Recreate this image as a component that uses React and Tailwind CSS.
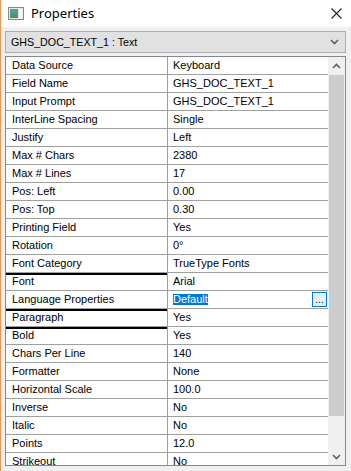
import React from "react";

const rows = [
  ["Data Source", "Keyboard"],
  ["Field Name", "GHS_DOC_TEXT_1"],
  ["Input Prompt", "GHS_DOC_TEXT_1"],
  ["InterLine Spacing", "Single"],
  ["Justify", "Left"],
  ["Max # Chars", "2380"],
  ["Max # Lines", "17"],
  ["Pos: Left", "0.00"],
  ["Pos: Top", "0.30"],
  ["Printing Field", "Yes"],
  ["Rotation", "0°"],
  ["Font Category", "TrueType Fonts", true],
  ["Font", "Arial"],
  ["Language Properties", "Default", true, true],
  ["Paragraph", "Yes", true],
  ["Bold", "Yes"],
  ["Chars Per Line", "140"],
  ["Formatter", "None"],
  ["Horizontal Scale", "100.0"],
  ["Inverse", "No"],
  ["Italic", "No"],
  ["Points", "12.0"],
  ["Strikeout", "No"],
];

const WindowIcon = () => (
  <svg width="16" height="13" viewBox="0 0 16 13">
    <rect x="0.5" y="0.5" width="15" height="12" fill="#e8e8e8" stroke="#8a8a8a" />
    <defs>
      <linearGradient id="g" x1="0" y1="0" x2="0" y2="1">
        <stop offset="0" stopColor="#5a9fb0" />
        <stop offset="1" stopColor="#3e9a4a" />
      </linearGradient>
    </defs>
    <rect x="2" y="2" width="8" height="9" fill="url(#g)" />
    <rect x="11" y="2" width="3" height="9" fill="#f8f8f8" />
  </svg>
);

const Chevron = ({ up }) => (
  <svg width="9" height="6" viewBox="0 0 9 6">
    <path
      d={up ? "M1 5 L4.5 1.5 L8 5" : "M1 1 L4.5 4.5 L8 1"}
      fill="none"
      stroke="#606060"
      strokeWidth="1.6"
    />
  </svg>
);

const Row = ({ label, value, thick, selected }) => (
  <div className="flex h-[18px]">
    <div
      className={
        "w-[162px] pl-[6px] flex items-center border-r border-r-[#a0a0a0] border-b border-b-[#a0a0a0] " +
        (thick ? "shadow-[0_1px_0_#000,0_2px_0_#000]" : "")
      }
    >
      {label}
    </div>
    <div className="flex-1 pl-[5px] pr-[1px] flex items-center border-b border-b-[#a0a0a0]">
      {selected ? (
        <>
          <span className="bg-[#0078d7] text-white leading-[11px] h-[11px]">{value}</span>
          <div className="ml-auto w-[15px] h-[15px] border border-[#0078d7] bg-[#e5f1fb] flex items-end justify-center text-[10px] leading-[10px] pb-px">
            ...
          </div>
        </>
      ) : (
        value
      )}
    </div>
  </div>
);

export default function App() {
  return (
    <div className="w-[351px] h-[471px] bg-[#f0f0f0] flex overflow-hidden font-['Liberation_Sans',Arial,sans-serif] text-[11px] text-black">
      <div className="w-px bg-[#e29a5a]" />
      <div className="flex-1 flex flex-col">
        <div className="h-[27px] bg-white flex items-center pl-[7px] pr-[9px]">
          <WindowIcon />
          <span className="ml-[7px] text-[13px] font-['Segoe_UI','Noto_Sans',sans-serif]">Properties</span>
          <svg className="ml-auto" width="11" height="11" viewBox="0 0 11 11">
            <path d="M0.5 0.5 L10.5 10.5 M10.5 0.5 L0.5 10.5" stroke="#222" strokeWidth="1.1" />
          </svg>
        </div>
        <div className="mt-[4px] ml-[4px] mr-[5px] h-[22px] border border-[#adadad] bg-[#e1e1e1] flex items-center pl-[5px] pr-[6px]">
          <span className="text-[10.7px]">GHS_DOC_TEXT_1 : Text</span>
          <span className="ml-auto">
            <Chevron />
          </span>
        </div>
        <div className="mt-[3px] ml-[4px] mr-[5px] h-[410px] border border-[#828790] bg-white flex overflow-hidden">
          <div className="w-[322px]">
            {rows.map(([l, v, t, s]) => (
              <Row key={l} label={l} value={v} thick={t} selected={s} />
            ))}
          </div>
          <div className="w-[17px] flex flex-col bg-[#f0f0f0]">
            <div className="h-[18px] flex items-center justify-center">
              <Chevron up />
            </div>
            <div className="h-[341px] mx-px bg-[#cdcdcd]" />
            <div className="flex-1" />
            <div className="h-[17px] flex items-center justify-center">
              <Chevron />
            </div>
          </div>
        </div>
      </div>
    </div>
  );
}
